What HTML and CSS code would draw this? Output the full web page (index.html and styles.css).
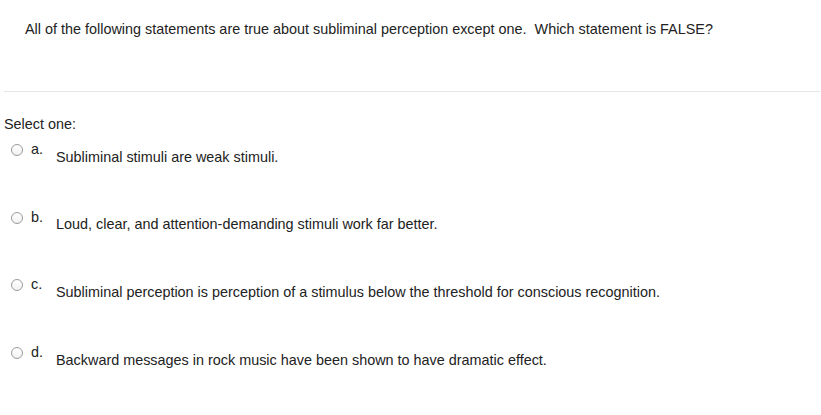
FILE: index.html
```html
<!DOCTYPE html>
<html>
<head>
<meta charset="utf-8">
<link rel="stylesheet" href="styles.css">
</head>
<body>
<div class="qtext">All of the following statements are true about subliminal perception except one.&nbsp; Which statement is FALSE?</div>
<hr class="sep">
<div class="prompt">Select one:</div>
<div class="answers">
  <div class="opt">
    <span class="radio"></span>
    <span class="letter">a.</span>
    <span class="text">Subliminal stimuli are weak stimuli.</span>
  </div>
  <div class="opt">
    <span class="radio"></span>
    <span class="letter">b.</span>
    <span class="text">Loud, clear, and attention-demanding stimuli work far better.</span>
  </div>
  <div class="opt">
    <span class="radio"></span>
    <span class="letter">c.</span>
    <span class="text">Subliminal perception is perception of a stimulus below the threshold for conscious recognition.</span>
  </div>
  <div class="opt">
    <span class="radio"></span>
    <span class="letter">d.</span>
    <span class="text">Backward messages in rock music have been shown to have dramatic effect.</span>
  </div>
</div>
</body>
</html>
```
FILE: styles.css
```css
html, body {
  margin: 0;
  padding: 0;
  background: #fff;
}
body {
  font-family: "Liberation Sans", Arial, sans-serif;
  font-size: 14.4px;
  line-height: 17px;
  color: #222;
}
.qtext {
  padding: 21px 0 0 25px;
}
.sep {
  margin: 53px 1px 0 4px;
  border: 0;
  border-top: 1px solid #e6e6e6;
  height: 0;
}
.prompt {
  margin: 24px 0 0 4px;
}
.answers {
  display: flex;
  flex-direction: column;
}
.opt {
  display: flex;
  align-items: flex-start;
  height: 67.7px;
  padding-left: 11px;
}
.radio {
  width: 10px;
  height: 10px;
  border: 1px solid #9a9a9a;
  border-radius: 50%;
  margin-top: 11px;
  flex: none;
  background: linear-gradient(#fff, #f2f2f2);
}
.letter {
  margin-left: 8px;
  width: 25px;
  margin-top: 8px;
}
.text {
  margin-top: 15.5px;
}
```
